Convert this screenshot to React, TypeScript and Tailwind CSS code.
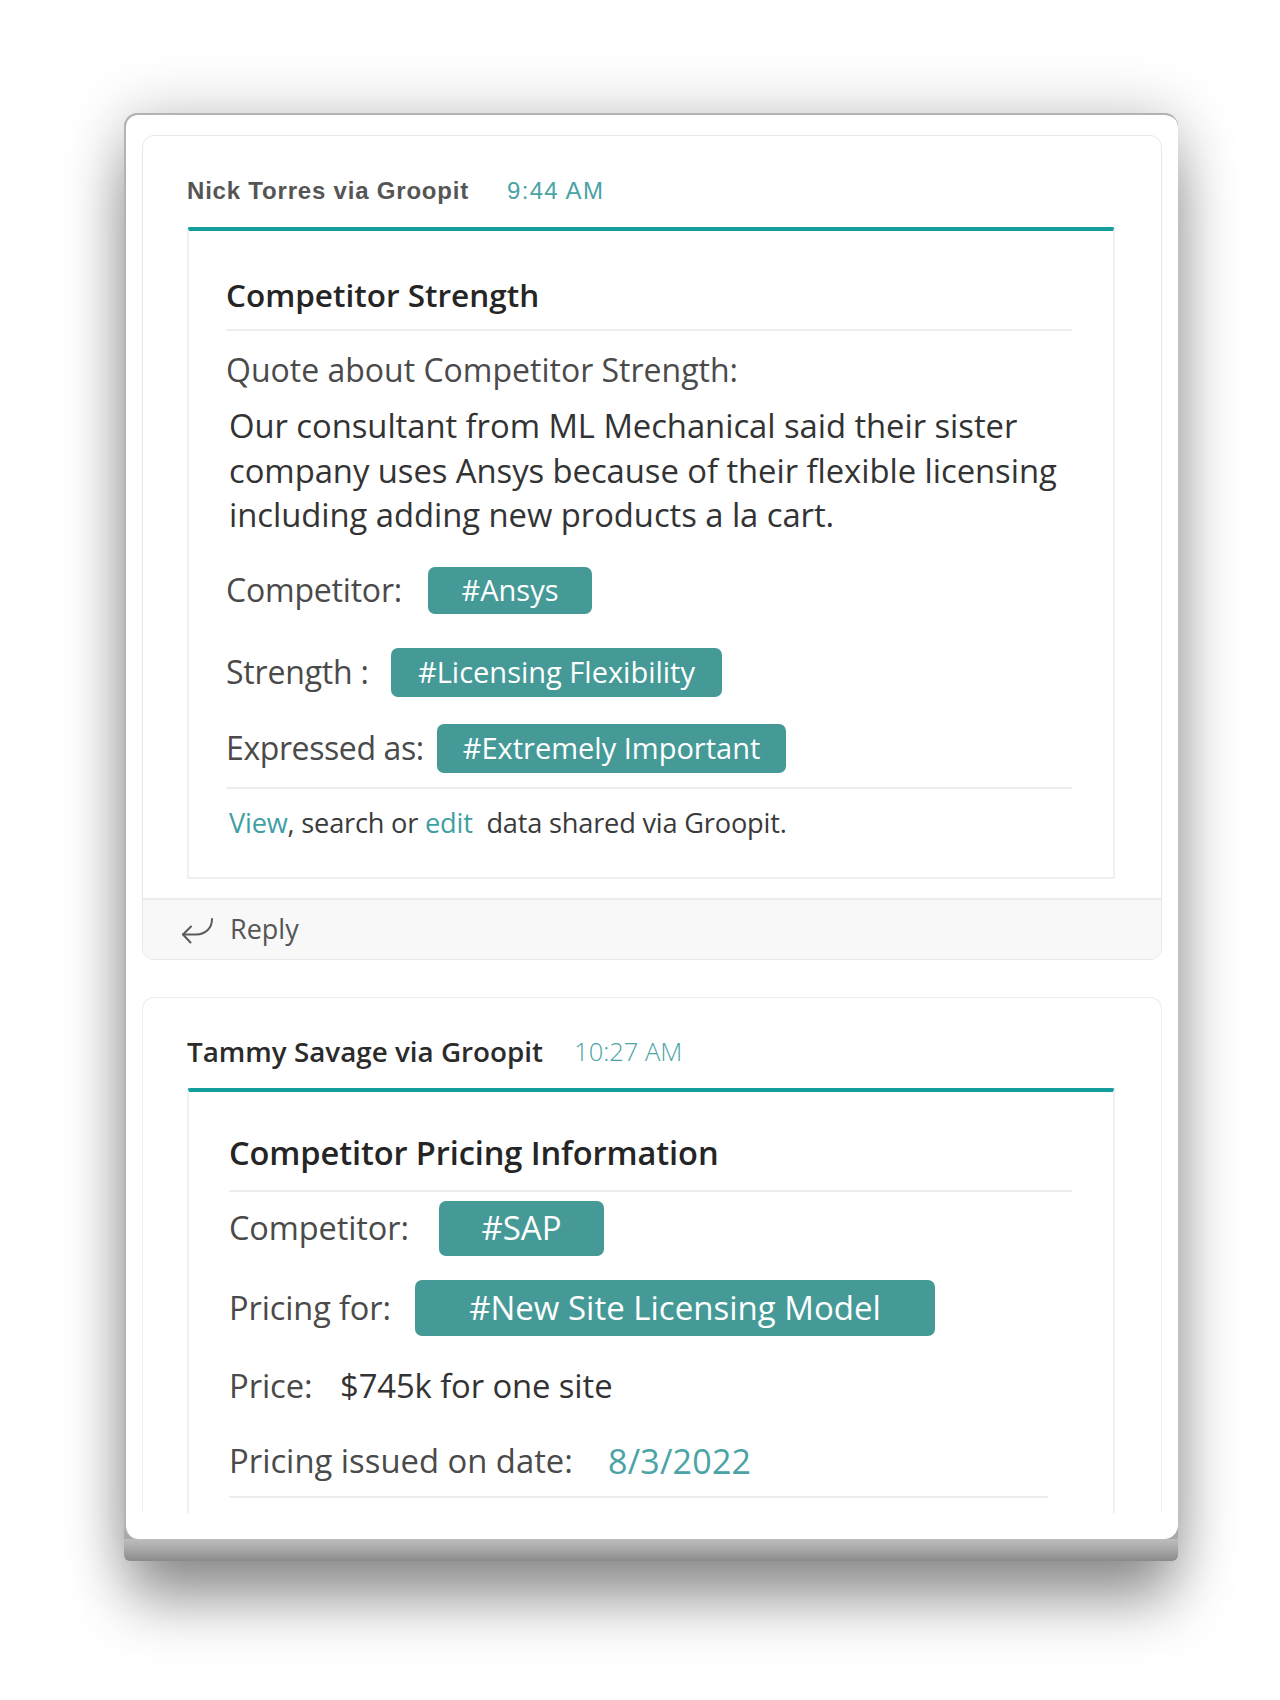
import React from "react";

const body = { fontFamily: '"Open Sans", "Noto Sans", sans-serif' };
const helv = { fontFamily: '"Liberation Sans", Arial, sans-serif' };

function ReplyIcon() {
  return (
    <svg width="33" height="26" viewBox="0 0 33 26" fill="none" stroke="#5a5a5a" strokeWidth="2" strokeLinecap="round" strokeLinejoin="round">
      <path d="M31 1 C31 10 25 16 15 16.5 L2 16.5" />
      <path d="M10 8.5 L2 16.5 L9.5 24.5" />
    </svg>
  );
}

function Pill({ children, w, h, size }: { children: React.ReactNode; w: string; h: string; size: string }) {
  return (
    <div className={`${w} ${h} ${size} rounded-[7px] bg-[#459a97] text-white flex items-center justify-center whitespace-nowrap`}>
      {children}
    </div>
  );
}

export default function App() {
  return (
    <div className="w-[1280px] h-[1700px] bg-white overflow-hidden pt-[113px] pl-[124px]" style={body}>
      <div className="w-[1054px] rounded-[14px] bg-[#a9a9a9] shadow-[0_45px_60px_-5px_rgba(0,0,0,0.38),0_0_60px_rgba(0,0,0,0.22)]">
        <div className="h-[1426px] rounded-[14px] bg-white border-t-2 border-l-2 border-[#b3b3b3] overflow-hidden">
          <div className="h-[1398px] overflow-hidden pt-[20px] px-[16px]">
            {/* Card 1 */}
            <div className="rounded-[12px] border border-[#e7e7e7] bg-white">
              <div className="pt-[39px] pl-[44px] flex items-center h-[70px] gap-[38px]">
                <span className="text-[24px] leading-[30px] font-bold text-[#555] tracking-[0.8px]" style={helv}>Nick Torres via Groopit</span>
                <span className="text-[24px] leading-[30px] text-[#4aa3a5] tracking-[1.3px]" style={helv}>9:44 AM</span>
              </div>
              <div className="mt-[21px] ml-[44px] mr-[46px] border-t-[4px] border-[#159c9c] rounded-t-[3px] border-x-2 border-b-2 border-x-[#f0f0f0] border-b-[#f0f0f0] pl-[37px] pr-[41px] pb-[36px]">
                <div className="pt-[44px] text-[31.5px] leading-[40px] font-semibold text-[#252525]">Competitor Strength</div>
                <div className="mt-[14px] h-[2px] bg-[#ededed]" />
                <div className="mt-[19px] text-[32px] leading-[40px] text-[#4a4a4a]">Quote about Competitor Strength:</div>
                <div className="mt-[14px] ml-[3px] text-[32.8px] leading-[44.5px] text-[#333] tracking-[-0.05px] whitespace-nowrap">
                  Our consultant from ML Mechanical said their sister
                  <br />
                  company uses Ansys because of their flexible licensing
                  <br />
                  including adding new products a la cart.
                </div>
                <div className="mt-[29px] flex items-center">
                  <div className="w-[202px] text-[32px] leading-[40px] text-[#4a4a4a] tracking-[-0.2px]">Competitor:</div>
                  <Pill w="w-[164px]" h="h-[47px]" size="text-[29px]">#Ansys</Pill>
                </div>
                <div className="mt-[34px] flex items-center">
                  <div className="w-[165px] text-[32px] leading-[40px] text-[#4a4a4a] tracking-[-0.2px]">Strength :</div>
                  <Pill w="w-[331px]" h="h-[49px]" size="text-[29px]">#Licensing Flexibility</Pill>
                </div>
                <div className="mt-[27px] flex items-center">
                  <div className="w-[211px] text-[32px] leading-[40px] text-[#4a4a4a] tracking-[-0.4px]">Expressed as:</div>
                  <Pill w="w-[349px]" h="h-[49px]" size="text-[29px]">#Extremely Important</Pill>
                </div>
                <div className="mt-[14px] h-[2px] bg-[#ededed]" />
                <div className="mt-[16px] ml-[3px] text-[27.2px] leading-[36px] text-[#3a3a3a] tracking-[-0.2px] whitespace-nowrap">
                  <span className="text-[#3f9fa3]">View</span>, search or <span className="text-[#3f9fa3]">edit</span>&nbsp; data shared via Groopit.
                </div>
              </div>
              <div className="mt-[19px] h-[61px] border-t-2 border-[#ececec] bg-[#f8f8f8] rounded-b-[12px] flex items-center pl-[38px]">
                <div className="mt-[4px]"><ReplyIcon /></div>
                <span className="ml-[16px] text-[27px] leading-[36px] text-[#555]">Reply</span>
              </div>
            </div>

            {/* Card 2 */}
            <div className="mt-[37px] rounded-t-[12px] border border-b-0 border-[#ececec] bg-white h-[520px]">
              <div className="pt-[39px] pl-[44px] flex items-center h-[67px] gap-[31px]">
                <span className="text-[27.8px] leading-[30px] font-semibold text-[#2b2b2b]">Tammy Savage via Groopit</span>
                <span className="text-[25.5px] leading-[30px] text-[#4aa3a5] font-light">10:27 AM</span>
              </div>
              <div className="mt-[23px] ml-[44px] mr-[46px] h-[470px] border-t-[4px] border-[#159c9c] rounded-t-[3px] border-x-2 border-x-[#f0f0f0] pl-[40px] pr-[41px]">
                <div className="pt-[41px] text-[32.6px] leading-[40px] font-semibold text-[#252525] tracking-[-0.1px]">Competitor Pricing Information</div>
                <div className="mt-[17px] h-[2px] bg-[#ededed]" />
                <div className="mt-[9px] flex items-center">
                  <div className="w-[210px] text-[32.5px] leading-[40px] text-[#4a4a4a] tracking-[-0.1px]">Competitor:</div>
                  <Pill w="w-[165px]" h="h-[55px]" size="text-[33px]">#SAP</Pill>
                </div>
                <div className="mt-[24px] flex items-center">
                  <div className="w-[186px] text-[32.5px] leading-[40px] text-[#4a4a4a] tracking-[-0.1px]">Pricing for:</div>
                  <Pill w="w-[520px]" h="h-[56px]" size="text-[33px]">#New Site Licensing Model</Pill>
                </div>
                <div className="mt-[30px] flex items-center text-[32.8px] leading-[40px] tracking-[-0.1px]">
                  <div className="w-[111px] text-[#4a4a4a]">Price:</div>
                  <div className="text-[#333]">$745k for one site</div>
                </div>
                <div className="mt-[35px] flex items-center text-[32.8px] leading-[40px]">
                  <div className="w-[379px] text-[#4a4a4a]">Pricing issued on date:</div>
                  <div className="text-[#4aa3a5] text-[34px] tracking-[0.2px]">8/3/2022</div>
                </div>
                <div className="mt-[15px] h-[2px] bg-[#ededed] mr-[24px]" />
              </div>
            </div>
          </div>
        </div>
        <div className="h-[22px] rounded-b-[6px] bg-gradient-to-b from-[#bdbdbd] via-[#a6a6a6] to-[#8a8a8a]" />
      </div>
    </div>
  );
}
